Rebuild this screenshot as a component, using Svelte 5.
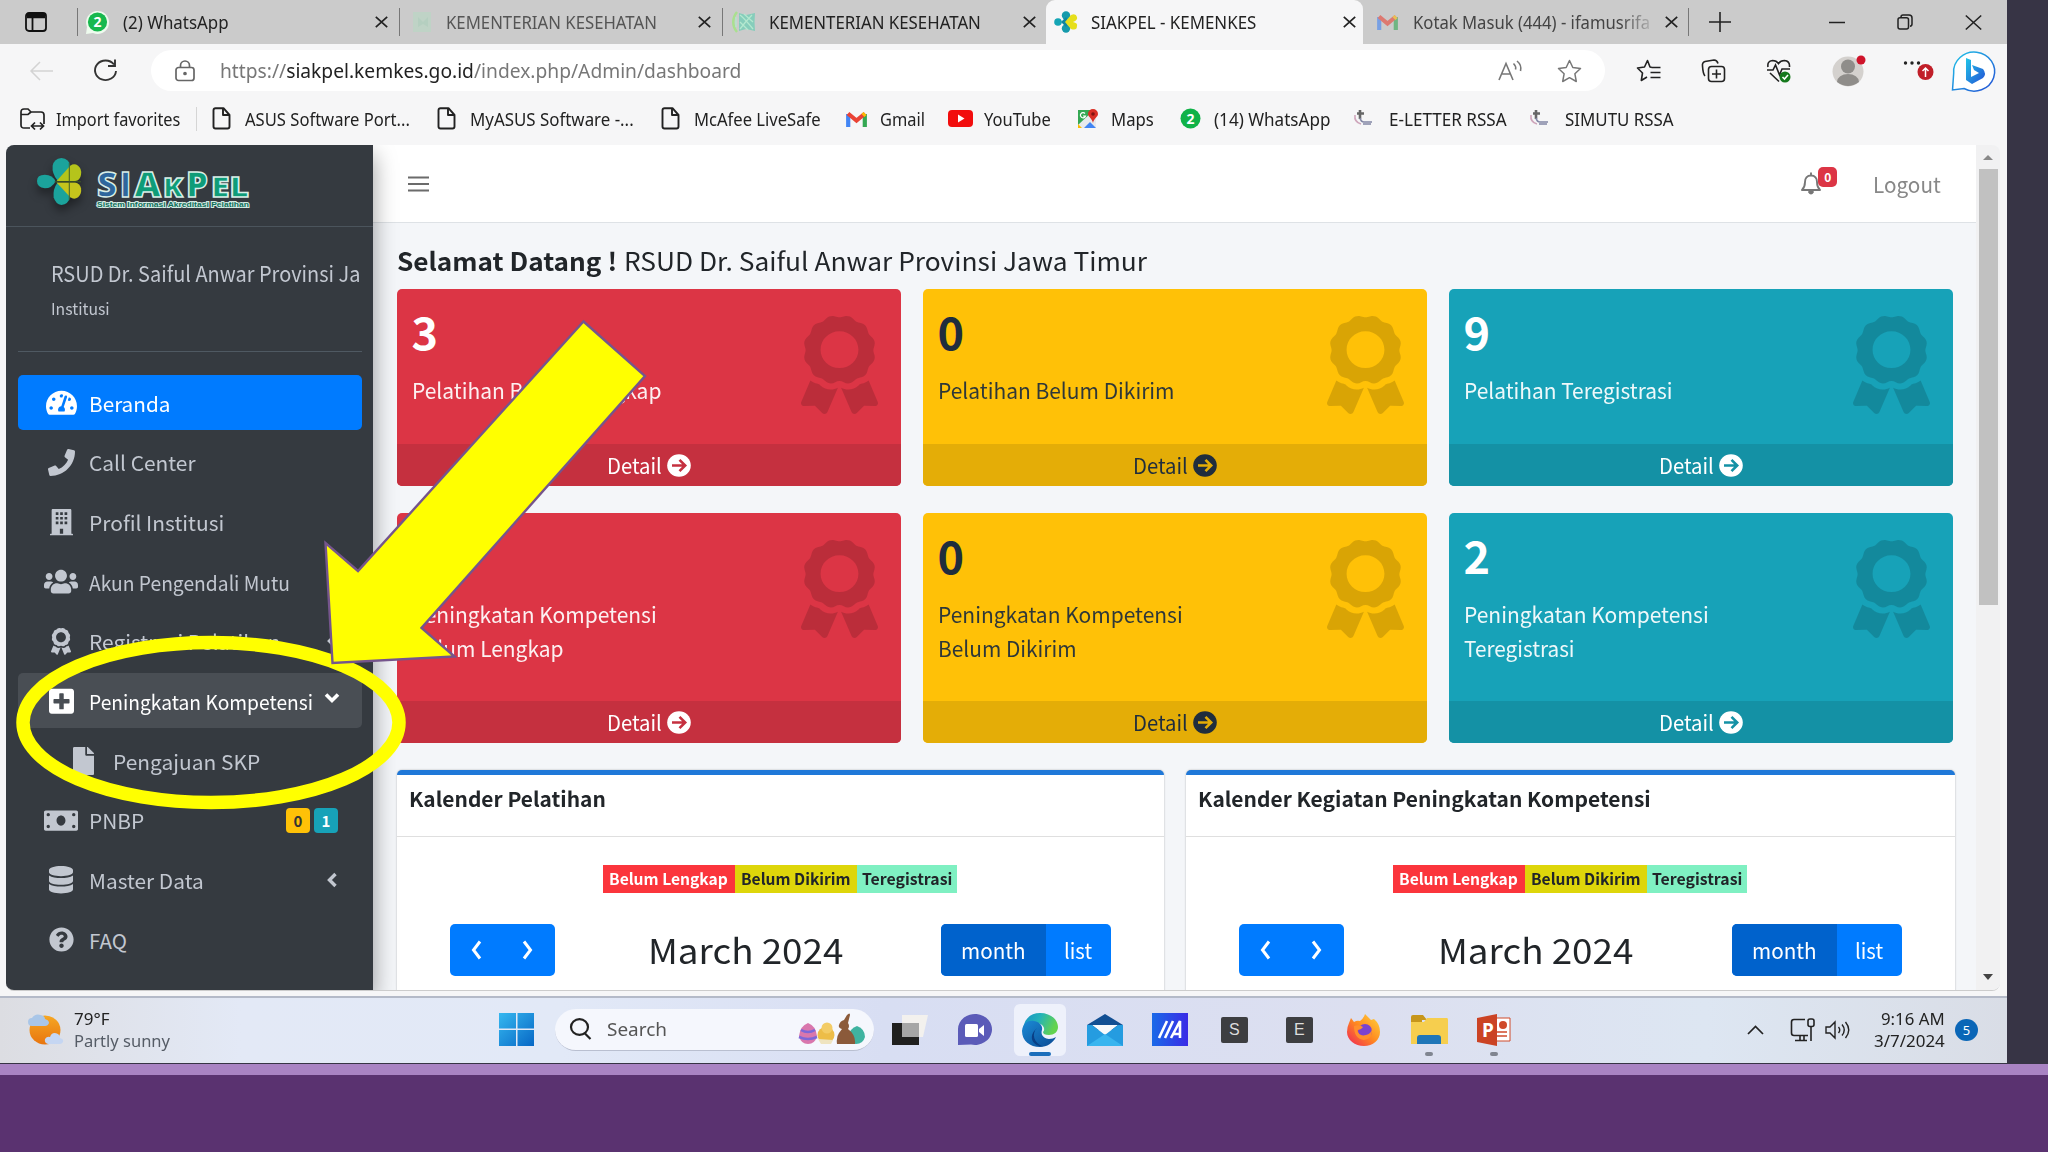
<script lang="ts">
  // squeezes or stretches a line of text to a fixed width
  function fit(node: HTMLElement, width: number) {
    const natural = node.offsetWidth
    if (!width || !natural) return
    node.style.transform = `scaleX(${width / natural})`
    node.style.marginRight = `${width - natural}px`
  }

  const icons: Record<string, { box: string; d: string }> = {
    gauge: { box: '0 0 576 512', d: 'M288 32C128.94 32 0 160.94 0 320c0 52.8 14.25 102.26 39.06 144.8 5.61 9.62 16.3 15.2 27.44 15.2h443c11.14 0 21.83-5.58 27.44-15.2C561.75 422.26 576 372.8 576 320c0-159.06-128.94-288-288-288zm0 64c14.71 0 26.58 10.13 30.32 23.65-1.11 2.26-2.64 4.23-3.45 6.67l-9.22 27.67c-5.13 3.49-10.97 6.01-17.64 6.01-17.67 0-32-14.33-32-32S270.33 96 288 96zM96 384c-17.67 0-32-14.33-32-32s14.33-32 32-32 32 14.33 32 32-14.33 32-32 32zm48-160c-17.67 0-32-14.33-32-32s14.33-32 32-32 32 14.33 32 32-14.33 32-32 32zm246.77-72.41l-61.33 184C343.13 347.33 352 364.54 352 384c0 11.72-3.38 22.55-8.88 32H232.88c-5.5-9.45-8.88-20.28-8.88-32 0-33.94 26.5-61.43 59.9-63.59l61.34-184.01c4.17-12.56 17.73-19.45 30.36-15.17 12.57 4.19 19.35 17.79 15.17 30.36zm14.66 57.2l15.52-46.55c3.47-1.29 7.13-2.23 11.05-2.23 17.67 0 32 14.33 32 32s-14.33 32-32 32c-11.38-.01-20.89-6.28-26.57-15.22zM480 384c-17.67 0-32-14.33-32-32s14.33-32 32-32 32 14.33 32 32-14.33 32-32 32z' },
    phone: { box: '0 0 512 512', d: 'M493.4 24.6l-104-24c-11.3-2.6-22.9 3.3-27.5 13.9l-48 112c-4.2 9.8-1.4 21.3 6.9 28l60.6 49.6c-36 76.7-98.9 140.5-177.2 177.2l-49.6-60.6c-6.8-8.3-18.2-11.1-28-6.9l-112 48C3.9 366.5-2 378.1.6 389.4l24 104C27.1 504.2 36.7 512 48 512c256.1 0 464-207.5 464-464 0-11.2-7.7-20.9-18.6-23.4z' },
    building: { box: '0 0 448 512', d: 'M436 480h-20V24c0-13-11-24-24-24H56C43 0 32 11 32 24v456H12c-7 0-12 5-12 12v20h448v-20c0-7-5-12-12-12zM112 64h52v52h-52zM112 154h52v52h-52zM112 244h52v52h-52zM198 64h52v52h-52zM198 154h52v52h-52zM198 244h52v52h-52zM284 64h52v52h-52zM284 154h52v52h-52zM284 244h52v52h-52zM192 384h64v96h-64z' },
    users: { box: '0 0 640 512', d: 'M96 224c35.3 0 64-28.7 64-64s-28.7-64-64-64-64 28.7-64 64 28.7 64 64 64zm448 0c35.3 0 64-28.7 64-64s-28.7-64-64-64-64 28.7-64 64 28.7 64 64 64zm32 32h-64c-17.6 0-33.5 7.1-45.1 18.6 40.3 22.1 68.9 62 75.1 109.4h66c17.7 0 32-14.3 32-32v-32c0-35.3-28.7-64-64-64zm-256 0c61.9 0 112-50.1 112-112S381.9 32 320 32 208 82.1 208 144s50.1 112 112 112zm76.8 32h-8.3c-20.8 10-43.9 16-68.5 16s-47.6-6-68.5-16h-8.3C179.6 288 128 339.6 128 403.2V432c0 26.5 21.5 48 48 48h288c26.5 0 48-21.5 48-48v-28.8c0-63.6-51.6-115.2-115.2-115.2zm-223.7-13.4C161.5 263.1 145.6 256 128 256H64c-35.3 0-64 28.7-64 64v32c0 17.7 14.3 32 32 32h65.9c6.3-47.4 34.9-87.3 75.2-109.4z' },
    award: { box: '0 0 384 512', d: 'M97.12 362.63c-8.69-8.69-4.16-6.24-25.12-11.85-9.51-2.55-17.87-7.45-25.43-13.32L1.2 448.7c-4.39 10.77 3.81 22.47 15.43 22.03l52.69-2.01L105.56 507c8 8.44 22.04 5.81 26.43-4.96l52.05-127.62c-10.84 6.04-22.87 9.58-35.31 9.58-19.5 0-37.82-7.59-51.61-21.37zM382.8 448.7l-45.37-111.24c-7.56 5.88-15.92 10.77-25.43 13.32-21.07 5.64-16.45 3.18-25.12 11.85-13.79 13.78-32.12 21.37-51.62 21.37-12.44 0-24.47-3.55-35.31-9.58L252 502.04c4.39 10.77 18.44 13.4 26.43 4.96l36.25-38.28 52.69 2.01c11.62.44 19.82-11.27 15.43-22.03zM263 340c15.28-15.55 17.03-14.21 38.79-20.14 13.89-3.79 24.75-14.84 28.47-28.98 7.48-28.4 5.54-24.97 25.95-45.75 10.17-10.35 14.14-25.44 10.42-39.58-7.47-28.38-7.48-24.42 0-52.83 3.72-14.14-.25-29.23-10.42-39.58-20.41-20.78-18.47-17.36-25.95-45.75-3.72-14.14-14.58-25.19-28.47-28.98-27.88-7.61-24.52-5.62-44.95-26.41-10.17-10.35-25-14.4-38.89-10.61-27.87 7.6-23.98 7.61-51.9 0-13.89-3.79-28.72.25-38.89 10.61-20.41 20.78-17.05 18.8-44.94 26.41-13.89 3.79-24.75 14.84-28.47 28.98-7.47 28.39-5.54 24.97-25.95 45.75-10.17 10.35-14.15 25.44-10.42 39.58 7.47 28.36 7.48 24.4 0 52.82-3.72 14.14.25 29.23 10.42 39.59 20.41 20.78 18.47 17.35 25.95 45.75 3.72 14.14 14.58 25.19 28.47 28.98C104.6 325.96 106.27 325 121 340c13.23 13.47 33.84 15.88 49.74 5.82a39.676 39.676 0 0 1 42.53 0c15.89 10.06 36.5 7.65 49.73-5.82zM97.66 175.96c0-53.03 42.24-96.02 94.34-96.02s94.34 42.99 94.34 96.02-42.24 96.02-94.34 96.02-94.34-42.99-94.34-96.02z' },
    plus: { box: '0 0 448 512', d: 'M400 32H48C21.5 32 0 53.5 0 80v352c0 26.5 21.5 48 48 48h352c26.5 0 48-21.5 48-48V80c0-26.5-21.5-48-48-48zm-32 252c0 6.6-5.4 12-12 12h-92v92c0 6.6-5.4 12-12 12h-56c-6.6 0-12-5.4-12-12v-92H92c-6.6 0-12-5.4-12-12v-56c0-6.6 5.4-12 12-12h92v-92c0-6.6 5.4-12 12-12h56c6.6 0 12 5.4 12 12v92h92c6.6 0 12 5.4 12 12v56z' },
    file: { box: '0 0 384 512', d: 'M224 136V0H24C10.7 0 0 10.7 0 24v464c0 13.3 10.7 24 24 24h336c13.3 0 24-10.7 24-24V160H248c-13.2 0-24-10.8-24-24zm160-14.1v6.1H256V0h6.1c6.4 0 12.5 2.5 17 7l97.9 98c4.5 4.5 7 10.6 7 16.9z' },
    money: { box: '0 0 640 512', d: 'M608 64H32C14 64 0 78 0 96v320c0 18 14 32 32 32h576c18 0 32-14 32-32V96c0-18-14-32-32-32zM80 112a32 32 0 1 1 0 64 32 32 0 0 1 0-64zM80 336a32 32 0 1 1 0 64 32 32 0 0 1 0-64zM560 112a32 32 0 1 1 0 64 32 32 0 0 1 0-64zM560 336a32 32 0 1 1 0 64 32 32 0 0 1 0-64zM320 160c46 0 84 43 84 96s-38 96-84 96-84-43-84-96 38-96 84-96z' },
    database: { box: '0 0 448 512', d: 'M448 73.143v45.714C448 159.143 347.667 192 224 192S0 159.143 0 118.857V73.143C0 32.857 100.333 0 224 0s224 32.857 224 73.143zM448 176v102.857C448 319.143 347.667 352 224 352S0 319.143 0 278.857V176c48.125 33.143 136.208 48.572 224 48.572S399.874 209.143 448 176zm0 160v102.857C448 479.143 347.667 512 224 512S0 479.143 0 438.857V336c48.125 33.143 136.208 48.572 224 48.572S399.874 369.143 448 336z' },
    question: { box: '0 0 512 512', d: 'M504 256c0 136.997-111.043 248-248 248S8 392.997 8 256C8 119.083 119.043 8 256 8s248 111.083 248 248zM262.655 90c-54.497 0-89.255 22.957-116.549 63.758-3.536 5.286-2.353 12.415 2.715 16.258l34.699 26.31c5.205 3.947 12.621 3.008 16.665-2.122 17.864-22.658 30.113-35.797 57.303-35.797 20.429 0 45.698 13.148 45.698 32.958 0 14.976-12.363 22.667-32.534 33.976C247.128 238.528 216 254.941 216 296v4c0 6.627 5.373 12 12 12h56c6.627 0 12-5.373 12-12v-1.333c0-28.462 83.186-29.647 83.186-106.667 0-58.002-60.165-102-116.531-102zM256 338c-25.365 0-46 20.635-46 46 0 25.364 20.635 46 46 46s46-20.636 46-46c0-25.365-20.635-46-46-46z' },
  }

  const tabs = [
    { title: '(2) WhatsApp', icon: 'wa', width: 322, text: 106, first: true },
    { title: 'KEMENTERIAN KESEHATAN', icon: 'kemenFaded', width: 323, text: 211, dim: true },
    { title: 'KEMENTERIAN KESEHATAN', icon: 'kemen', width: 325, text: 212 },
    { title: 'SIAKPEL - KEMENKES', icon: 'petals', width: 317, text: 165, active: true },
    { title: 'Kotak Masuk (444) - ifamusrifa', icon: 'gmail', width: 325, text: 237, faded: true },
  ]

  const favorites = [
    { title: 'ASUS Software Port...', icon: 'page', at: 212, text: 165, gap: 14 },
    { title: 'MyASUS Software -...', icon: 'page', at: 437, text: 164, gap: 14 },
    { title: 'McAfee LiveSafe', icon: 'page', at: 661, text: 127, gap: 14 },
    { title: 'Gmail', icon: 'gmail', at: 846, text: 45, gap: 13 },
    { title: 'YouTube', icon: 'youtube', at: 948, text: 67, gap: 11 },
    { title: 'Maps', icon: 'maps', at: 1076, text: 43, gap: 11 },
    { title: '(14) WhatsApp', icon: 'waRound', at: 1180, text: 116, gap: 13 },
    { title: 'E-LETTER RSSA', icon: 'rssa', at: 1353, text: 118, gap: 16 },
    { title: 'SIMUTU RSSA', icon: 'rssa', at: 1529, text: 109, gap: 16 },
  ]

  const menu = [
    { label: 'Beranda', icon: 'gauge', size: 31, text: 82, state: 'active' },
    { label: 'Call Center', icon: 'phone', size: 27, text: 107 },
    { label: 'Profil Institusi', icon: 'building', size: 23, text: 135 },
    { label: 'Akun Pengendali Mutu', icon: 'users', size: 34, text: 201 },
    { label: 'Registrasi Pelatihan', icon: 'award', size: 20, text: 191, caret: 'left' },
    { label: 'Peningkatan Kompetensi', icon: 'plus', size: 25, text: 224, state: 'open', caret: 'down' },
    { label: 'Pengajuan SKP', icon: 'file', size: 21, text: 147, sub: true },
    { label: 'PNBP', icon: 'money', size: 34, text: 55, badges: true },
    { label: 'Master Data', icon: 'database', size: 24, text: 115, caret: 'left' },
    { label: 'FAQ', icon: 'question', size: 25, text: 38 },
  ]

  const boxes = [
    { count: 3, lines: [['Pelatihan Belum Lengkap', 249]], tone: 'red' },
    { count: 0, lines: [['Pelatihan Belum Dikirim', 237]], tone: 'yellow' },
    { count: 9, lines: [['Pelatihan Teregistrasi', 209]], tone: 'teal' },
    { count: 1, lines: [['Peningkatan Kompetensi', 245], ['Belum Lengkap', 152]], tone: 'red' },
    { count: 0, lines: [['Peningkatan Kompetensi', 245], ['Belum Dikirim', 139]], tone: 'yellow' },
    { count: 2, lines: [['Peningkatan Kompetensi', 245], ['Teregistrasi', 111]], tone: 'teal' },
  ] as { count: number; lines: [string, number][]; tone: string }[]

  const calendars = [
    { title: 'Kalender Pelatihan', text: 197 },
    { title: 'Kalender Kegiatan Peningkatan Kompetensi', text: 453 },
  ]
</script>

{#snippet fa(name: string, width: number, height: number | undefined = undefined)}
  <svg {width} {height} viewBox={icons[name].box} preserveAspectRatio={height ? 'none' : undefined} fill="currentColor" fill-rule="evenodd"><path d={icons[name].d} /></svg>
{/snippet}

{#snippet petals(w: number, h: number)}
  <svg width={w} height={h} viewBox="0 0 46 48" preserveAspectRatio="none">
    <path d="M21 23Q15 16 16 8q1-7 9-8 8 1 9 8v1z" fill="#1ba39c" />
    <path d="M21 25q-5 7-4 15 2 7 8 8 7-1 9-8v-1z" fill="#1ba39c" />
    <path d="M19 24q-4 7-11 7-8-1-8-7.500T8 17q8 0 11 7z" fill="#1ba39c" />
    <path d="M20 23.500L34 8q4-3 8 0 4 3 3 9-1 6-6 6.500z" fill="#b5c41b" />
    <path d="M20 25l14 15q4 3 8 0 4-3 3-9-1-5-6-6z" fill="#c5c41c" />
    <path d="M33 5v38M18 24.300h27" stroke="#3f5a28" stroke-width="1" />
  </svg>
{/snippet}

{#snippet favicon(name: string)}
  {#if name === 'wa'}
    <svg width="25" height="25" viewBox="0 0 25 25"><path d="M1 24l1-7A11.500 11.500 0 1 1 8 23z" fill="#eefbee" /><circle cx="12.500" cy="12" r="9.600" fill="#17b84e" /><text class="num" x="12.500" y="17" text-anchor="middle" fill="#fff">2</text></svg>
  {:else if name === 'waRound'}
    <svg width="21" height="21" viewBox="0 0 21 21"><circle cx="10.500" cy="10.500" r="10" fill="#10b248" /><text class="num" x="10.500" y="15.500" text-anchor="middle" fill="#fff">2</text></svg>
  {:else if name === 'kemen'}
    <svg width="25" height="22" viewBox="0 0 25 22" fill="none">
      <path d="M5 1C0 7 0 15 5 21" stroke="#a9e08f" stroke-width="2.500" />
      <path d="M7 2l7 2 9-2q-1 9 0 18l-9-2-7 2z" fill="#86cdbb" />
      <path d="M8 4q5 4 13 14M8 11l8 8M12 3l9 8M20 4Q14 10 8 18M4 6v10" stroke="#b4e8cf" stroke-width="1.300" />
    </svg>
  {:else if name === 'kemenFaded'}
    <svg width="25" height="22" viewBox="0 0 25 22"><path d="M4 1h18v20H4z" fill="#bfd3c6" /><path d="M9 6l5 5 5-5v10l-5-3-5 3z" fill="#b5cfc0" /></svg>
  {:else if name === 'petals'}
    <svg width="24" height="22" viewBox="0 0 24 22"><circle cx="12" cy="4.500" r="4.200" fill="#159aab" /><circle cx="12" cy="17.500" r="4.200" fill="#159aab" /><circle cx="4" cy="11" r="3.800" fill="#15a5b5" /><path d="M7 11l5-5 3 5-3 5z" fill="#0f86a0" /><path d="M11 11l6-7q5-2 6 2 1 3-4 5 5 1 4 4 0 5-6 3z" fill="#e6df1c" /></svg>
  {:else if name === 'gmail'}
    <svg width="21" height="16" viewBox="0 0 21 16" fill="none" stroke-width="4.200"><path d="M2.200 16V3" stroke="#4285f4" /><path d="M18.800 16V3" stroke="#34a853" /><path d="M2 2.500l8.500 7 8.500-7" stroke="#ea4335" /><path d="M17 4.500l2-2" stroke="#fbbc04" /></svg>
  {:else if name === 'youtube'}
    <svg width="25" height="17" viewBox="0 0 25 17"><rect width="25" height="17" rx="4" fill="#f20d0d" /><path d="M10 4.500v8l6.500-4z" fill="#fff" /></svg>
  {:else if name === 'maps'}
    <svg width="24" height="20" viewBox="0 0 24 20"><path d="M2 1h18v18H2z" fill="#34a853" /><path d="M2 16L18 1h2v18H5z" fill="#e8eaed" /><path d="M8 19l6-6 6 6z" fill="#4285f4" /><path d="M2 15l4 4H2z" fill="#fbbc04" /><path d="M9 4.500a2.600 2.600 0 1 0 .5 2.500H7" fill="none" stroke="#fff" stroke-width="1.200" /><path d="M17 0a5 5 0 0 1 5 5c0 3-4 4-5 9-1-5-5-6-5-9a5 5 0 0 1 5-5z" fill="#d93025" /><circle cx="17" cy="5" r="1.800" fill="#811411" /></svg>
  {:else if name === 'rssa'}
    <svg width="20" height="17" viewBox="0 0 20 17" fill="none"><path d="M7 0v9M4 3.500h7" stroke="#666" stroke-width="2.600" /><path d="M2 5q-1 7 6 9" stroke="#cfa6bb" stroke-width="1.600" /><path d="M7 8q1 4 4 4h8M10 14h8" stroke="#8387a5" stroke-width="1.600" /></svg>
  {:else}
    <svg width="19" height="23" viewBox="0 0 19 23" fill="none" stroke="#222" stroke-width="1.900" stroke-linejoin="round"><path d="M3.500 1.200h8l6 6.800v11.500q0 2-2 2h-12q-2 0-2-2V3.200q0-2 2-2z" /><path d="M11 1.500V8h6.500" /></svg>
  {/if}
{/snippet}

{#snippet cross()}
  <svg width="13" height="12" viewBox="0 0 13 12" stroke="#222" stroke-width="1.700"><path d="M.8.8l11.400 10.400M12.200.8L.8 11.200" /></svg>
{/snippet}

<div class="slide">
  <div class="desktop">
    <div class="tabbar">
      <div class="workspace">
        <svg width="22" height="20" viewBox="0 0 22 20" fill="none" stroke="#111" stroke-width="1.800"><rect x="1" y="1" width="20" height="18" rx="3" /><path d="M2 4h18" stroke-width="4.500" /><path d="M7.500 6v13" /></svg>
      </div>
      {#each tabs as tab}
        <div class="tab" class:first={tab.first} class:active={tab.active} class:dim={tab.dim} style:width="{tab.width}px">
          <span class="tab-icon">{@render favicon(tab.icon)}</span>
          <span class="tab-title" class:faded={tab.faded}><span class="fit" use:fit={tab.text}>{tab.title}</span></span>
          {@render cross()}
        </div>
      {/each}
      <div class="new-tab">
        <svg width="22" height="20" viewBox="0 0 22 20" stroke="#222" stroke-width="1.600"><path d="M11 0v20M0 10h22" /></svg>
      </div>
      <div class="window-buttons">
        <svg width="16" height="16" viewBox="0 0 16 16" stroke="#222" stroke-width="1.500"><path d="M0 8.500h16" /></svg>
        <svg width="16" height="16" viewBox="0 0 16 16" fill="none" stroke="#222" stroke-width="1.500"><rect x="1" y="3.800" width="10.500" height="11.200" rx="2" /><path d="M4 3.500V3q0-2 2-2h6q3 0 3 3v6q0 2-2 2.300" /></svg>
        <svg width="17" height="15" viewBox="0 0 17 15" stroke="#222" stroke-width="1.600"><path d="M.8.500l15.400 14M16.200.500L.8 14.500" /></svg>
      </div>
    </div>

    <div class="toolbar">
      <svg width="25" height="20" viewBox="0 0 25 20" fill="none" stroke="#d3d3d3" stroke-width="1.500"><path d="M24 10H2M11 1L2 10l9 9" /></svg>
      <svg class="reload" width="25" height="23" viewBox="0 0 25 23" fill="none" stroke="#333" stroke-width="1.900"><path d="M21 5.500A10.500 9.800 0 1 0 23 12M22 .500V7h-7" /></svg>
      <div class="address">
        <svg width="20" height="22" viewBox="0 0 20 22" fill="none" stroke="#666" stroke-width="1.700"><rect x="1" y="7.500" width="18" height="13" rx="2.500" /><path d="M5.500 7V5.500a4.500 4.500 0 0 1 9 0V7" /><circle cx="10" cy="13.500" r="1" fill="#666" /></svg>
        <span class="url"><span class="fit" use:fit={521}>https://<b>siakpel.kemkes.go.id</b>/index.php/Admin/dashboard</span></span>
        <svg class="read" width="25" height="22" viewBox="0 0 25 22" fill="none" stroke="#777" stroke-width="1.600"><path d="M1 20L8 3.500 15 20M3.700 14h8.600M15.500 3.500q3 3 2 6M19 1q5 4 3.500 10" /></svg>
        <svg width="25" height="24" viewBox="0 0 25 24" fill="none" stroke="#777" stroke-width="1.500" stroke-linejoin="round"><path d="M12.500 1.500l3.300 7 7.700 1-5.600 5.300 1.400 7.700-6.800-3.800-6.800 3.800 1.400-7.700L1.500 9.500l7.700-1z" /></svg>
      </div>
      <div class="tools">
        <svg width="25" height="24" viewBox="0 0 25 24" fill="none" stroke="#222" stroke-width="1.600" stroke-linejoin="round"><path d="M16 8.500l-2-.500-2.500-6.500-3 6.500-7 1 5 5-1.200 7.500 5.700-3.500M16 8.500h8.500M14.500 13.500h10M14.500 18.500h10" /></svg>
        <svg width="25" height="24" viewBox="0 0 25 24" fill="none" stroke="#222" stroke-width="1.600"><rect x="7.500" y="7.500" width="16" height="15" rx="3" /><path d="M15.500 10.500v9M11 15h9M4 17Q2 15 1.500 7 1 3.500 4 2.500l9-1.500q3 0 4 3.500" /></svg>
        <svg width="26" height="24" viewBox="0 0 26 24" fill="none" stroke="#222" stroke-width="1.600"><path d="M2 8Q1 2 6.500 1.500q4 0 6 3 2-3 6-3Q24 2 23.500 8M1 11h6l2.500-5 4 10L16 10h8M4 14l9 8.500" /><circle cx="19" cy="18" r="5.500" fill="#15791d" stroke="none" /><path d="M16.500 18l2 2 3.500-4" stroke="#fff" /></svg>
        <svg width="34" height="32" viewBox="0 0 34 32"><ellipse cx="16" cy="16.500" rx="15.500" ry="15" fill="#d4d1ce" /><circle cx="16" cy="11.500" r="7" fill="#8f8d8a" /><path d="M5 27a11 8 0 0 1 22 0q-11 8-22 0z" fill="#8f8d8a" /><circle cx="29" cy="5" r="4.500" fill="#cf142b" /></svg>
        <svg class="dots" width="31" height="24" viewBox="0 0 31 24"><g fill="#222"><circle cx="2.500" cy="4" r="1.700" /><circle cx="9" cy="4" r="1.700" /><circle cx="15.500" cy="4" r="1.700" /></g><circle cx="22.500" cy="13" r="8" fill="#c11f29" /><path d="M22.500 18V9M19.500 12l3-3 3 3" stroke="#fff" stroke-width="1.500" fill="none" /></svg>
        <svg width="44" height="42" viewBox="0 0 44 42">
          <defs><linearGradient id="bing" x1="0" x2="1" y1="0" y2="1"><stop offset="0" stop-color="#20c5e8" /><stop offset="1" stop-color="#2450d5" /></linearGradient></defs>
          <path d="M1.500 40l1.200-17A20.500 19.500 0 1 1 13 38.500z" fill="#fff" stroke="url(#bing)" stroke-width="1.500" />
          <path d="M15 8l5 2v17l8-4-5-3-2-5 11 4q4 5 0 9l-11 6-6-4z" fill="url(#bing)" />
        </svg>
      </div>
    </div>

    <div class="favorites">
      <div class="import">
        <svg width="25" height="22" viewBox="0 0 25 22" fill="none" stroke="#222" stroke-width="1.700"><path d="M10 20H4q-3 0-3-3V4q0-3 3-3h4l3 3h10q3 0 3 3v9M1 6.500h7l3-2.500M12 18h11M15 14.500L11.500 18l3.500 3.500M20 14.500l3.500 3.500-3.500 3.500" /></svg>
        <span class="fit" use:fit={124}>Import favorites</span>
      </div>
      {#each favorites as item, i}
        <div class="favorite" style:width="{(favorites[i + 1]?.at ?? 1710) - item.at}px" style:gap="{item.gap}px">
          {@render favicon(item.icon)}
          <span class="fit" use:fit={item.text}>{item.title}</span>
        </div>
      {/each}
    </div>

    <div class="page">
      <aside class="sidebar">
        <div class="brand">
          <span class="brand-mark">{@render petals(45, 47)}</span>
          <div class="logo">
            <svg width="156" height="30" viewBox="0 0 156 30">
              <g class="logo-text" fill="#2f669c">
                <text x="1" y="28" font-size="36" textLength="20" lengthAdjust="spacingAndGlyphs">S</text>
                <text x="24" y="28" font-size="36" textLength="11" lengthAdjust="spacingAndGlyphs">I</text>
              </g>
              <g class="logo-text" fill="#0f9c78">
                <text x="38" y="28" font-size="36" textLength="27" lengthAdjust="spacingAndGlyphs">A</text>
                <text x="67" y="28" font-size="27" textLength="20" lengthAdjust="spacingAndGlyphs">K</text>
                <text x="90" y="28" font-size="36" textLength="22" lengthAdjust="spacingAndGlyphs">P</text>
                <text x="115" y="28" font-size="28" textLength="38" lengthAdjust="spacingAndGlyphs">EL</text>
              </g>
            </svg>
            <svg width="156" height="10" viewBox="0 0 156 10">
              <text class="logo-sub" x="1" y="8" textLength="152" lengthAdjust="spacingAndGlyphs">Sistem Informasi Akreditasi Pelatihan</text>
            </svg>
          </div>
        </div>
        <div class="user">
          <div class="user-name"><span class="fit" use:fit={336}>RSUD Dr. Saiful Anwar Provinsi Jawa</span></div>
          <div class="user-role"><span class="fit" use:fit={59}>Institusi</span></div>
        </div>
        <nav>
          {#each menu as item}
            <div class="menu-item {item.state ?? ''}" class:sub={item.sub}>
              <span class="menu-icon">{@render fa(item.icon, item.size)}</span>
              <span class="fit" use:fit={item.text}>{item.label}</span>
              {#if item.badges}
                <span class="counts"><b class="warn">0</b><b class="info">1</b></span>
              {/if}
              {#if item.caret === 'left'}
                <svg class="caret" width="10" height="16" viewBox="0 0 10 16" fill="none" stroke="currentColor" stroke-width="3.400"><path d="M8.500 2L2.500 8l6 6" /></svg>
              {:else if item.caret === 'down'}
                <svg class="caret down" width="16" height="10" viewBox="0 0 16 10" fill="none" stroke="currentColor" stroke-width="3.600"><path d="M2 1.500L8 7.500l6-6" /></svg>
              {/if}
            </div>
          {/each}
        </nav>
      </aside>

      <main>
        <header>
          <svg width="21" height="16" viewBox="0 0 21 16" stroke="#6b6b6b" stroke-width="2"><path d="M0 1.500h21M0 8h21M0 14.500h21" /></svg>
          <div class="header-right">
            <span class="bell">
              <svg width="20" height="23" viewBox="0 0 20 23" fill="none" stroke="#777" stroke-width="1.900" stroke-linejoin="round"><path d="M10 3.500c-4 0-6 3-6 6.500 0 4-1 6-3 8h18c-2-2-3-4-3-8 0-3.500-2-6.500-6-6.500zM10 .500v3" /><path d="M8 20q2 3 4 0z" fill="#777" /></svg>
              <b>0</b>
            </span>
            <span class="fit logout" use:fit={68}>Logout</span>
          </div>
        </header>

        <div class="content">
          <h1><span class="fit" use:fit={220}><b>Selamat Datang !</b></span><span class="fit" use:fit={523}>RSUD Dr. Saiful Anwar Provinsi Jawa Timur</span></h1>

          <div class="boxes">
            {#each boxes as box}
              <div class="box {box.tone}">
                <div class="inner">
                  <div>
                    <div class="count">{box.count}</div>
                    {#each box.lines as [line, width]}
                      <div class="line"><span class="fit" use:fit={width}>{line}</span></div>
                    {/each}
                  </div>
                  {@render fa('award', 77, 98)}
                </div>
                <div class="more">
                  <span class="fit" use:fit={55}>Detail</span>
                  <svg width="24" height="23" viewBox="0 0 24 23"><ellipse cx="12" cy="11.500" rx="11.800" ry="11.300" fill="currentColor" /><path d="M5 11.500h12.500M12.500 5.800l5.700 5.700-5.700 5.700" class="arrow" /></svg>
                </div>
              </div>
            {/each}
          </div>

          <div class="calendars">
            {#each calendars as cal}
              <section class="calendar">
                <h2><span class="fit" use:fit={cal.text}>{cal.title}</span></h2>
                <div class="legend">
                  <b class="red"><span class="fit" use:fit={119}>Belum Lengkap</span></b>
                  <b class="lime"><span class="fit" use:fit={110}>Belum Dikirim</span></b>
                  <b class="mint"><span class="fit" use:fit={90}>Teregistrasi</span></b>
                </div>
                <div class="cal-bar">
                  <div class="arrows">
                    <svg width="14" height="20" viewBox="0 0 14 20" fill="none" stroke="#fff" stroke-width="3"><path d="M11 1.500L4.500 10l6.500 8.500" /></svg>
                    <svg width="14" height="20" viewBox="0 0 14 20" fill="none" stroke="#fff" stroke-width="3"><path d="M3 1.500L9.500 10 3 18.500" /></svg>
                  </div>
                  <div class="month"><span class="fit" use:fit={195}>March 2024</span></div>
                  <div class="views">
                    <span class="on"><span class="fit" use:fit={65}>month</span></span>
                    <span><span class="fit" use:fit={28}>list</span></span>
                  </div>
                </div>
              </section>
            {/each}
          </div>
        </div>
      </main>

      <div class="scrollbar">
        <svg width="12" height="7" viewBox="0 0 12 7" fill="#888"><path d="M6 1l5 5H1z" /></svg>
        <div class="thumb"></div>
        <svg class="down" width="12" height="7" viewBox="0 0 12 7" fill="#444"><path d="M6 7L1 1h10z" /></svg>
      </div>
    </div>

    <div class="taskbar">
      <svg width="36" height="32" viewBox="0 0 36 32"><defs><linearGradient id="sun" x1="0" y1="0" x2="0" y2="1"><stop offset="0" stop-color="#f6a723" /><stop offset="1" stop-color="#e8750f" /></linearGradient></defs><ellipse cx="17" cy="16" rx="15.500" ry="14.500" fill="url(#sun)" /><path d="M4 12q-4 0-4-4t4-4q3-5 9-3 4 1 4 4 4 1 4 4-1 3-4 3z" fill="#a9c6e8" /><path d="M20 30q-4-1-3-5 2-3 5-2 2-6 8-3 2 1 2 4 4 1 3 4-1 2-3 2z" fill="#c5d6f2" /></svg>
      <div class="weather">
        <span><span class="fit" use:fit={35}>79°F</span></span>
        <span class="soft"><span class="fit" use:fit={96}>Partly sunny</span></span>
      </div>
      <svg class="start" width="35" height="33" viewBox="0 0 35 33"><defs><linearGradient id="win" x1="0" y1="0" x2="1" y2="1"><stop offset="0" stop-color="#35b8f0" /><stop offset="1" stop-color="#0767c5" /></linearGradient></defs><path d="M0 0h17v15.500H0zM18.500 0H35v15.500H18.500zM0 17h17v16H0zM18.500 17H35v16H18.500z" fill="url(#win)" /></svg>
      <div class="search">
        <svg width="23" height="22" viewBox="0 0 23 22" fill="none" stroke="#222" stroke-width="2.200"><ellipse cx="10.500" cy="9" rx="8.500" ry="7.800" /><path d="M15.500 15l6 6" /></svg>
        <span class="fit" use:fit={60}>Search</span>
        <svg class="bunny" width="68" height="32" viewBox="0 0 68 32"><path d="M10 10q8 3 9 13-2 8-9 8t-9-8q1-10 9-13z" fill="#d977ad" /><path d="M3 17q7 4 14 0M1 24q9 4 18 0" stroke="#7c67d8" stroke-width="2.500" fill="none" /><ellipse cx="28" cy="22" rx="8.500" ry="8" fill="#edbd48" /><circle cx="29" cy="15" r="5.500" fill="#f3cc66" /><path d="M20 26l15 1-2 4H23z" fill="#efe4c0" /><path d="M59 13q8 3 8 11-2 7-9 7t-8-7q1-8 9-11z" fill="#3fb3a0" /><path d="M39 31q-1-7 2-11l3-4q-4-1-3-4 1-4 5-5l3-5q3-3 3 0l-2 8q2 3 0 6 8 6 7 15z" fill="#8b5a3a" /></svg>
      </div>
      <div class="apps">
        <span class="app"><svg width="36" height="32" viewBox="0 0 36 32"><path d="M0 9h27v22H0z" fill="#20201f" /><path d="M10 1h26l-5 22H10z" fill="#f3f1ee" /><path d="M10 9h17v14H10z" fill="#a6a6a6" /></svg></span>
        <span class="app"><svg width="35" height="32" viewBox="0 0 35 32"><path d="M1 31V15A17 15.500 0 1 1 14 30.500z" fill="#5b5bb8" /><rect x="8" y="10" width="13" height="13" rx="1.500" fill="#fff" /><path d="M22 15l5-4v11l-5-4z" fill="#fff" /></svg></span>
        <span class="app current"><svg width="36" height="34" viewBox="0 0 36 34">
          <defs>
            <linearGradient id="edge" x1="0" x2="1" y1="0" y2=".3"><stop offset="0" stop-color="#1590c8" /><stop offset=".5" stop-color="#24b3b8" /><stop offset="1" stop-color="#63d34f" /></linearGradient>
            <linearGradient id="edgeBlue" x1="0" x2="1" y1="0" y2="1"><stop offset="0" stop-color="#1b8bd6" /><stop offset="1" stop-color="#0b4a94" /></linearGradient>
          </defs>
          <path d="M1 15C3 5 9 0 18 0c11 0 18 7 18 14 0 5-4 8-9 8-4 0-6-1-6-3 3-3 0-9-7-9-6 0-11 2-13 5z" fill="url(#edge)" />
          <path d="M0 18C1 9 7 7 12 8c6 1 9 5 8 9-1 2-1 8 7 9 3 0 5-1 7-2-3 6-9 10-16 10C8 34 0 28 0 18z" fill="url(#edgeBlue)" />
          <path d="M15 15c-6 6-3 15 6 18.500C11 33 5 24 15 15z" fill="#0a3f85" />
        </svg></span>
        <span class="app"><svg width="36" height="32" viewBox="0 0 36 32"><path d="M0 11L18 0l18 11v5H0z" fill="#124f93" /><path d="M5 11h26l-13 10z" fill="#f7f9fc" /><path d="M0 11h5l13 10 13-10h5v21H0z" fill="#259ce0" /><path d="M0 32l18-12 18 12z" fill="#39b5ef" /></svg></span>
        <span class="app"><svg width="36" height="33" viewBox="0 0 36 33"><defs><linearGradient id="asus" x1="0" x2="1" y1="0" y2="0"><stop offset="0" stop-color="#1a6ae8" /><stop offset="1" stop-color="#3a2be6" /></linearGradient></defs><path d="M0 0h36v33H0z" fill="url(#asus)" /><path d="M7 25L15 8M13 25l8-17M19 25l9-17v17M22 21h6" stroke="#fff" stroke-width="2.600" fill="none" /></svg></span>
        <span class="app letter"><b>S</b></span>
        <span class="app letter"><b>E</b></span>
        <span class="app"><svg width="34" height="32" viewBox="0 0 34 32"><defs><linearGradient id="fox" x1="1" x2="0" y1="0" y2="1"><stop offset="0" stop-color="#ffd83d" /><stop offset=".5" stop-color="#ff8a20" /><stop offset="1" stop-color="#ef2059" /></linearGradient></defs><path d="M2 9l2-5 3 4q3-2 6-1 4-3 5-7 4 4 6 6l3-1q6 5 6 13c0 8-7 14-16 14S0 26 0 18q0-5 2-9z" fill="url(#fox)" /><circle cx="18" cy="17" r="7" fill="#7a43d0" /><path d="M7 12q5-2 9 1-2 3-6 3 2 7 9 5 5-1 6-6 1 10-8 11-10-1-10-14z" fill="#ff8f2c" /></svg></span>
        <span class="app dot"><svg width="37" height="31" viewBox="0 0 37 31"><path d="M0 3q0-2 2-2h10l4 5h-5v6H0z" fill="#c7961b" /><path d="M0 8h13l3-4h20q1 0 1 2v24H0z" fill="#f6ce4e" /><path d="M6 30v-6q0-3 3-3h18q3 0 3 3v6z" fill="#1f76b8" /></svg></span>
        <span class="app dot"><svg width="34" height="32" viewBox="0 0 34 32"><path d="M16 4h17v23H16z" fill="#fff" stroke="#cf4a2a" /><circle cx="26" cy="11" r="4" fill="#cf4a2a" /><path d="M20 18h10M20 22h10" stroke="#cf4a2a" stroke-width="1.500" /><path d="M0 4l20-4v32L0 28z" fill="#cb4324" /><text x="5" y="23" font-size="19" font-weight="700" fill="#fff">P</text></svg></span>
      </div>
      <div class="tray">
        <svg width="17" height="10" viewBox="0 0 17 10" fill="none" stroke="#222" stroke-width="1.700"><path d="M1 9l7.500-7.500L16 9" /></svg>
        <svg width="26" height="24" viewBox="0 0 26 24" fill="none" stroke="#222" stroke-width="1.600"><path d="M15 1.500H4q-2.500 0-2.500 2.500v11q0 2.500 2.500 2.500h14M10 18v4M14 18v4M5 22.500h12" /><rect x="18" y="1" width="6" height="7.500" rx="2" /><path d="M21 8.500V23" /></svg>
        <svg width="26" height="20" viewBox="0 0 26 20" fill="none" stroke="#222" stroke-width="1.400"><path d="M1 7h4l5-5v16l-5-5H1zM13.500 7q2.500 3 0 6M17 4.500q4.500 5.500 0 11M20.500 2q6.500 8 0 16" /></svg>
        <div class="clock">
          <span><span class="fit" use:fit={64}>9:16 AM</span></span>
          <span><span class="fit" use:fit={71}>3/7/2024</span></span>
        </div>
        <b class="notice">5</b>
      </div>
    </div>
  </div>

  <div class="stripe"></div>

  <svg class="callout" width="660" height="840" viewBox="0 0 660 840">
    <ellipse cx="211" cy="722.500" rx="188" ry="80" fill="none" stroke="#ff0" stroke-width="13.500" />
    <path d="M583.500 321.500L645 376 421.500 628l33 28.500L332.500 663 325.500 543l32.500 28z" fill="#ff0" stroke="#75558c" stroke-width="2.400" />
  </svg>
</div>

<style>
  :global(body) {
    margin: 0;
  }

  .slide {
    position: relative;
    width: 2048px;
    height: 1152px;
    overflow: hidden;
    background: linear-gradient(#373445 0 1064px, #5a3270 1064px);
    font-family: 'Noto Sans', 'Open Sans', sans-serif;
    color: #222;
  }

  .slide * {
    box-sizing: border-box;
  }

  svg {
    display: block;
    flex-shrink: 0;
    overflow: visible;
  }

  .desktop {
    width: 2007px;
    height: 1063px;
    display: flex;
    flex-direction: column;
    background: #f6f6f7;
  }

  .stripe {
    height: 11px;
    margin-top: 1px;
    background: #a983c3;
  }

  .fit {
    display: inline-block;
    white-space: nowrap;
    transform-origin: 0 50%;
  }

  .num {
    font-size: 14px;
    font-weight: 700;
  }

  .tabbar {
    height: 44px;
    display: flex;
    align-items: center;
    background: #cbcbcb;
    font-size: 18px;
  }

  .workspace {
    width: 76px;
    padding-left: 25px;
  }

  .tab {
    height: 44px;
    display: flex;
    align-items: center;
    padding: 0 10px 0 10px;
    border-left: 1px solid transparent;
    background: linear-gradient(#777, #777) 0 8px / 1px 28px no-repeat;
  }

  .tab.first {
    padding-left: 8px;
  }

  .tab.first .tab-icon {
    width: 38px;
  }

  .tab.active {
    height: 45px;
    background: #f6f6f7;
    border-radius: 9px 9px 0 0;
    padding-left: 7px;
    padding-right: 7px;
  }

  .tab.active + .tab {
    background: none;
    padding-left: 13px;
  }

  .tab.active + .tab .tab-icon {
    opacity: 0.6;
  }

  .tab-icon {
    width: 37px;
  }

  .tab.active + .tab .tab-icon {
    width: 36px;
  }

  .tab-title {
    flex: 1;
    min-width: 0;
    line-height: 26px;
    margin-top: -1px;
  }

  .tab.dim .tab-title {
    color: #555;
  }

  .tab-title.faded {
    color: #444;
    -webkit-mask-image: linear-gradient(90deg, #000 82%, transparent 97%);
    mask-image: linear-gradient(90deg, #000 82%, transparent 97%);
  }

  .new-tab {
    height: 44px;
    padding-left: 21px;
    display: flex;
    align-items: center;
    background: linear-gradient(#777, #777) 0 8px / 1px 28px no-repeat;
  }

  .window-buttons {
    margin-left: auto;
    padding-right: 25px;
    display: flex;
    align-items: center;
    gap: 52px;
  }

  .toolbar {
    height: 53px;
    display: flex;
    align-items: center;
    padding: 0 9px 0 29px;
  }

  .reload {
    margin-left: 39px;
  }

  .address {
    width: 1454px;
    height: 41px;
    margin-left: 33px;
    padding: 0 23px 0 24px;
    border-radius: 21px;
    background: #fff;
    display: flex;
    align-items: center;
    font-size: 19.500px;
    color: #777;
  }

  .url {
    flex: 1;
    margin-left: 25px;
    line-height: 28px;
  }

  .url b {
    font-weight: 400;
    color: #222;
  }

  .read {
    margin-right: 34px;
  }

  .tools {
    flex: 1;
    margin-left: 31px;
    display: flex;
    align-items: center;
    gap: 40px;
  }

  .dots {
    margin: 0 -23px 0 -3px;
  }

  .favorites {
    height: 48px;
    display: flex;
    align-items: center;
    padding: 0 0 5px 20px;
    font-size: 17.500px;
  }

  .import {
    width: 192px;
    display: flex;
    align-items: center;
    gap: 11px;
    background: linear-gradient(#d5d5d5, #d5d5d5) 176px 0 / 1px 28px no-repeat;
  }

  .favorite {
    display: flex;
    align-items: center;
  }

  .page {
    height: 846px;
    margin: 0 7px 5px 6px;
    display: flex;
    border-radius: 8px;
    overflow: hidden;
    background: #f4f6f9;
    border-bottom: 1px solid #ccc;
    font-family: 'Noto Sans CJK SC', 'Open Sans', sans-serif;
  }

  .sidebar {
    width: 367px;
    flex-shrink: 0;
    position: relative;
    z-index: 1;
    background: #353a40;
    color: #c2c7d0;
    box-shadow: 0 10px 22px rgba(0, 0, 0, 0.4);
  }

  .brand {
    height: 82px;
    padding: 13px 0 0 31px;
    display: flex;
    border-bottom: 1px solid #4b545c;
  }

  .brand-mark {
    filter: drop-shadow(0 6px 5px rgba(0, 0, 0, 0.4));
  }

  .logo {
    margin: 11px 0 0 14px;
  }

  .logo-text {
    font-family: 'Open Sans', sans-serif;
    font-weight: 800;
    stroke: #d9eee8;
    stroke-width: 1.500px;
  }

  .logo-sub {
    font: 700 8px 'Liberation Sans', sans-serif;
    fill: #0e6e58;
    stroke: #d4ebe4;
    stroke-width: 2px;
    paint-order: stroke;
  }

  .user {
    height: 125px;
    margin: 0 11px 0 12px;
    padding: 29px 0 0 33px;
    border-bottom: 1px solid #4f5962;
  }

  .user-name {
    overflow: hidden;
    font-size: 21.500px;
    line-height: 34px;
    width: 309px;
  }

  .user-role {
    font-size: 16px;
    line-height: 26px;
    margin: 5px 0 0;
  }

  nav {
    padding: 23px 11px 0 12px;
    display: flex;
    flex-direction: column;
    gap: 4.700px;
    font-size: 20.500px;
  }

  .menu-item {
    height: 55px;
    padding: 0 25px 0 22px;
    border-radius: 5px;
    display: flex;
    align-items: center;
    line-height: 30px;
  }

  .menu-item.active {
    background: #007bff;
    color: #fff;
  }

  .menu-item.open {
    background: #494e54;
    color: #fff;
  }

  .menu-item.sub {
    padding-left: 50px;
  }

  .menu-icon {
    width: 42px;
    margin-right: 7px;
    display: flex;
    justify-content: center;
  }

  .sub .menu-icon {
    width: 38px;
    padding-right: 7px;
  }

  .caret {
    margin-left: auto;
  }

  .caret.down {
    margin: 0 -3px 5px auto;
  }

  .counts {
    margin-left: auto;
    margin-right: -1px;
    display: flex;
    gap: 4px;
  }

  .counts b {
    width: 24px;
    height: 25px;
    border-radius: 4px;
    font-size: 15px;
    line-height: 25px;
    text-align: center;
  }

  .warn {
    background: #ffc107;
    color: #333;
  }

  .info {
    background: #17a2b8;
    color: #fff;
  }

  main {
    flex: 1;
    min-width: 0;
  }

  header {
    height: 78px;
    padding: 0 35px 0 35px;
    display: flex;
    align-items: center;
    justify-content: space-between;
    background: #fff;
    border-bottom: 1px solid #dee2e6;
  }

  .header-right {
    display: flex;
    align-items: center;
  }

  .bell {
    display: flex;
    position: relative;
    width: 72px;
  }

  .bell b {
    position: absolute;
    left: 17px;
    top: -5px;
    width: 19px;
    height: 20px;
    border-radius: 5px;
    background: #dc3545;
    color: #fff;
    font-size: 12px;
    line-height: 19px;
    text-align: center;
  }

  .logout {
    font-size: 21px;
    line-height: 30px;
    color: #888;
  }

  .content {
    padding: 0 21px 0 23.500px;
  }

  h1 {
    margin: 0;
    height: 66px;
    padding-top: 19px;
    font-size: 25px;
    font-weight: 400;
    line-height: 36px;
    display: flex;
    gap: 7px;
    color: #212529;
  }

  .boxes {
    display: grid;
    grid-template-columns: repeat(3, 504.500px);
    grid-template-rows: 197px 230px;
    column-gap: 21.500px;
    row-gap: 27px;
  }

  .box {
    display: flex;
    flex-direction: column;
    border-radius: 5px;
    overflow: hidden;
    color: #fff;
  }

  .box.red {
    background: #dc3545;
    --foot: #c5303f;
  }

  .box.yellow {
    background: #ffc107;
    color: #1f2d3d;
    --foot: #e4ad07;
  }

  .box.teal {
    background: #17a2b8;
    --foot: #1491a5;
  }

  .inner {
    flex: 1;
    display: flex;
    justify-content: space-between;
    padding: 27px 23px 0 15px;
  }

  .inner > :global(svg) {
    color: rgba(0, 0, 0, 0.15);
  }

  .count {
    height: 65px;
    margin-top: -8px;
    font-size: 45px;
    font-weight: 700;
    line-height: 46px;
  }

  .line {
    font-size: 21.500px;
    line-height: 33.500px;
    opacity: 0.93;
  }

  .more {
    height: 42px;
    display: flex;
    justify-content: center;
    align-items: center;
    gap: 5px;
    background: var(--foot);
    font-size: 21px;
    line-height: 30px;
  }

  .more .arrow {
    fill: none;
    stroke: var(--foot);
    stroke-width: 2.600px;
  }

  .calendars {
    margin-top: 27px;
    display: grid;
    grid-template-columns: 767px 769px;
    gap: 22px;
  }

  .calendar {
    height: 240px;
    background: #fff;
    border-radius: 5px;
    border-top: 5px solid #1f78d8;
    box-shadow: 0 0 2px rgba(0, 0, 0, 0.3);
    color: #212529;
  }

  h2 {
    margin: 0;
    height: 62px;
    padding: 7px 12px;
    border-bottom: 1px solid #dfdfdf;
    font-size: 20.500px;
    font-weight: 700;
    line-height: 32px;
  }

  .legend {
    margin: 28px 1px 0 0;
    display: flex;
    justify-content: center;
    font-size: 16px;
    line-height: 27px;
  }

  .legend b {
    height: 28px;
    padding-left: 6.500px;
    text-align: left;
  }

  .legend .red {
    width: 132px;
    background: #fb353c;
    color: #fff;
  }

  .legend .lime {
    width: 122px;
    padding-left: 6px;
    background: #ded60a;
  }

  .legend .mint {
    width: 100px;
    padding-left: 5px;
    background: #7ff0c2;
  }

  .cal-bar {
    margin: 31px 53px 0 53px;
    height: 52px;
    display: flex;
    justify-content: space-between;
    align-items: center;
  }

  .arrows {
    width: 105px;
    height: 52px;
    border-radius: 5px;
    background: #007bff;
    display: flex;
    align-items: center;
    justify-content: space-around;
  }

  .month {
    font-size: 34.500px;
    line-height: 50px;
    margin: -3px 0 0 -3px;
  }

  .views {
    width: 170px;
    height: 52px;
    border-radius: 5px;
    overflow: hidden;
    background: #007bff;
    color: #fff;
    display: flex;
    font-size: 21px;
    line-height: 52px;
  }

  .views > span {
    flex: 1;
    text-align: center;
  }

  .views > .on {
    flex: 0 0 105px;
    background: #0062cc;
  }

  .scrollbar {
    width: 24px;
    padding: 9px 0 10px;
    background: #f1f1f2;
    display: flex;
    flex-direction: column;
    align-items: center;
  }

  .thumb {
    width: 19px;
    height: 436px;
    margin-top: 8px;
    background: #c1c1c1;
  }

  .down {
    margin-top: auto;
  }

  .taskbar {
    flex: 1;
    border-top: 2px solid #b4bac8;
    padding: 0 30px 2px 28px;
    display: flex;
    align-items: center;
    background: linear-gradient(90deg, #dcdde2, #e3e9f6 12%, #e2e9f7 28%, #d8def3 44%, #dcdff0 68%, #dde6f2 85%, #d9dde6);
    font-size: 16px;
  }

  .weather {
    width: 425px;
    padding-left: 10px;
    display: flex;
    flex-direction: column;
    line-height: 22px;
  }

  .soft {
    color: #555c66;
  }

  .start {
    margin-left: 10px;
  }

  .search {
    width: 319px;
    height: 42px;
    margin-left: 21px;
    padding: 0 8px 0 14px;
    border-radius: 21px;
    display: flex;
    align-items: center;
    gap: 15px;
    background: #f5f7fd;
    border-bottom: 1px solid #b9bfd0;
    font-size: 18px;
    color: #555;
  }

  .bunny {
    margin-left: auto;
  }

  .apps {
    margin-left: 10px;
    display: flex;
    align-items: center;
    gap: 12.900px;
  }

  .app {
    width: 52px;
    height: 52px;
    display: flex;
    align-items: center;
    justify-content: center;
    border-radius: 6px;
    position: relative;
  }

  .current {
    background: #eef1fb;
  }

  .current::after,
  .dot::after {
    content: '';
    position: absolute;
    bottom: 0;
    width: 8px;
    height: 4px;
    border-radius: 2px;
    background: #808590;
  }

  .current::after {
    width: 22px;
    background: #1b6dbb;
  }

  .letter b {
    width: 27px;
    height: 26px;
    border-radius: 2px;
    background: #3d3e41;
    color: #ddd;
    font: 16px/26px 'Liberation Sans', sans-serif;
    text-align: center;
  }

  .tray {
    margin-left: auto;
    display: flex;
    align-items: center;
  }

  .tray svg {
    margin-right: 9px;
  }

  .tray svg:first-child {
    margin-right: 26px;
  }

  .clock {
    width: 85px;
    display: flex;
    flex-direction: column;
    align-items: flex-end;
    line-height: 22px;
  }

  .notice {
    width: 23px;
    height: 22px;
    margin-left: 10px;
    border-radius: 50%;
    background: #0a66b7;
    color: #fff;
    font-size: 13px;
    font-weight: 400;
    line-height: 22px;
    text-align: center;
  }

  .tray .notice {
    margin-right: -1px;
  }

  .callout {
    position: absolute;
    left: 0;
    top: 0;
    z-index: 2;
  }
</style>
